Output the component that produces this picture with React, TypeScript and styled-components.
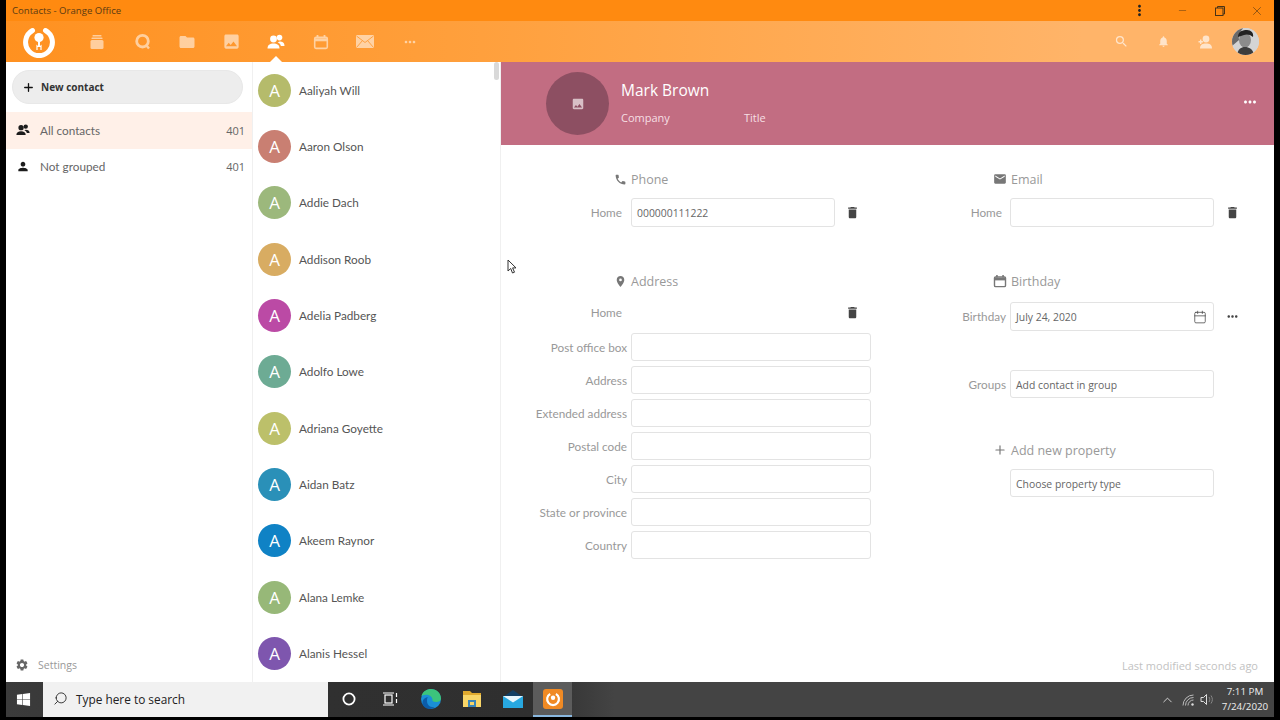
import { ReactNode } from "react";
import styled, { createGlobalStyle } from "styled-components";
import {
  MdDelete,
  MdEmail,
  MdFolder,
  MdImage,
  MdMoreHoriz,
  MdMoreVert,
  MdNotifications,
  MdPerson,
  MdPhone,
  MdPlace,
  MdSearch,
  MdSettings,
} from "react-icons/md";
import { FaWindows } from "react-icons/fa";
import { Calendar, ChevronUp, Minus, Plus, Search, X } from "lucide-react";

const GlobalStyle = createGlobalStyle`
  html, body {
    margin: 0;
    height: 100%;
    background: #000;
    overflow: hidden;
  }
  * {
    box-sizing: border-box;
  }
`;

const Screen = styled.div`
  width: 1280px;
  height: 720px;
  padding: 0 6px 3px;
  background: #000;
  display: flex;
  flex-direction: column;
  position: relative;
  font-family: "Lato", "Open Sans", sans-serif;
  font-size: 11.75px;
  color: #555;
`;

const TitleBar = styled.div`
  height: 21px;
  flex: none;
  padding: 0 7px 0 6px;
  background: #ff8a10;
  display: flex;
  align-items: center;
  gap: 17.5px;
  font-family: "Open Sans", sans-serif;
  font-size: 9.6px;
  color: #5b3a12;
`;

const TitleText = styled.span`
  flex: 1;
`;

const WindowButton = styled.div<{ $shift?: number }>`
  width: 20px;
  margin-right: ${(p) => p.$shift ?? 0}px;
  display: flex;
  justify-content: center;
  color: #4a3316;
`;

const Header = styled.header`
  height: 41px;
  flex: none;
  display: flex;
  align-items: center;
  background: linear-gradient(90deg, #ff9120 0%, #ffa13f 40%, #ffb469 85%);
  color: #fff;
`;

const LogoSlot = styled.div`
  width: 69px;
  padding-left: 17px;
  display: flex;
  align-items: center;
`;

const AppIcons = styled.nav`
  display: flex;
  flex: 1;
  align-items: center;
`;

const AppIcon = styled.div<{ $active?: boolean }>`
  width: 44.7px;
  height: 41px;
  display: flex;
  align-items: center;
  justify-content: center;
  position: relative;
  opacity: ${(p) => (p.$active ? 1 : 0.55)};
  ${(p) =>
    p.$active &&
    `&::after {
      content: "";
      position: absolute;
      bottom: 0;
      left: 50%;
      margin-left: -6px;
      border: 6px solid transparent;
      border-top: 0;
      border-bottom-color: #fff;
    }`}
`;

const RightIcons = styled.div`
  display: flex;
  align-items: center;
  padding-right: 15px;
`;

const RightIcon = styled.div`
  width: 42px;
  display: flex;
  justify-content: center;
  opacity: 0.65;
`;

const UserPhoto = styled.div`
  width: 27px;
  height: 27px;
  margin-left: 6px;
  border-radius: 50%;
  overflow: hidden;
  background: #d5d5d5;
`;

const Main = styled.main`
  flex: 1;
  min-height: 0;
  display: flex;
  background: #fff;
`;

const Sidebar = styled.aside`
  width: 247px;
  flex: none;
  display: flex;
  flex-direction: column;
  border-right: 1px solid #f0f0f0;
`;

const NewContact = styled.button`
  height: 34px;
  margin: 8px 9px 8px 6px;
  padding: 0 0 0 9px;
  border: 1px solid #e8e8e8;
  border-radius: 17px;
  background: #ededed;
  display: flex;
  align-items: center;
  gap: 6px;
  font: 700 10px "Open Sans", sans-serif;
  color: #333;
`;

const GroupRow = styled.div<{ $active?: boolean }>`
  height: 36.5px;
  padding: 0 7px 0 10px;
  display: flex;
  align-items: center;
  background: ${(p) => (p.$active ? "#fff0e8" : "#fff")};
  color: #666;
`;

const GroupIcon = styled.div`
  width: 14px;
  flex: none;
  display: flex;
  justify-content: center;
  color: #1c1c1c;
`;

const GroupName = styled.span`
  flex: 1;
  margin-left: 10px;
`;

const GroupCount = styled.span`
  font-family: "Open Sans", sans-serif;
  font-size: 11px;
`;

const SettingsRow = styled.div`
  margin-top: auto;
  height: 34px;
  padding-left: 9px;
  display: flex;
  align-items: center;
  gap: 9px;
  font-family: "Open Sans", sans-serif;
  font-size: 10.5px;
  color: #999;
  svg {
    color: #666;
  }
`;

const ContactList = styled.section`
  width: 248px;
  flex: none;
  overflow: hidden;
  position: relative;
  border-right: 1px solid #f0f0f0;
`;

const ScrollThumb = styled.div`
  position: absolute;
  top: 0;
  right: 1px;
  width: 5px;
  height: 18px;
  border-radius: 3px;
  background: #d9d9d9;
`;

const ContactRow = styled.div`
  height: 56.35px;
  padding-left: 5px;
  display: flex;
  align-items: center;
  gap: 8px;
  color: #555;
`;

const Initial = styled.div<{ $color: string }>`
  width: 33px;
  height: 33px;
  border-radius: 50%;
  background: ${(p) => p.$color};
  color: #fff;
  display: flex;
  align-items: center;
  justify-content: center;
  font-family: "Open Sans", sans-serif;
  font-size: 17px;
`;

const Details = styled.section`
  flex: 1;
  min-width: 0;
  display: flex;
  flex-direction: column;
`;

const ContactHeader = styled.div`
  height: 83px;
  flex: none;
  padding: 10px 15px 0 45px;
  background: #c26d82;
  display: flex;
  color: #fff;
`;

const BigAvatar = styled.div`
  width: 63px;
  height: 63px;
  border-radius: 50%;
  background: #8d4f62;
  color: #d8bfc6;
  display: flex;
  align-items: center;
  justify-content: center;
`;

const HeaderText = styled.div`
  flex: 1;
  margin-left: 12px;
`;

const ContactName = styled.div`
  margin-top: 6px;
  font-family: "Open Sans", sans-serif;
  font-size: 15.5px;
  line-height: 24px;
`;

const HeaderFields = styled.div`
  margin-top: 8px;
  display: flex;
  font-family: "Open Sans", sans-serif;
  font-size: 11px;
  color: #f6dfe4;
`;

const HeaderField = styled.span`
  width: 123px;
`;

const HeaderMenu = styled.div`
  margin-top: 21px;
  height: 20px;
`;

const Body = styled.div`
  flex: 1;
  min-height: 0;
  padding: 22px 0 0 26px;
  display: flex;
`;

const Column = styled.div<{ $width: number }>`
  width: ${(p) => p.$width}px;
  flex: none;
`;

const SectionHead = styled.div<{ $top?: number }>`
  height: 24px;
  margin: ${(p) => p.$top ?? 0}px 0 0 87px;
  display: flex;
  align-items: center;
  gap: 4px;
  font-family: "Open Sans", sans-serif;
  font-size: 12.5px;
  color: #999;
  svg {
    color: #777;
  }
`;

const Row = styled.div<{ $top: number; $height?: number }>`
  height: ${(p) => p.$height ?? 28}px;
  margin-top: ${(p) => p.$top}px;
  display: flex;
  align-items: center;
`;

const Label = styled.div<{ $inset?: number }>`
  width: 100px;
  padding-right: ${(p) => p.$inset ?? 0}px;
  flex: none;
  text-align: right;
  color: #999;
  white-space: nowrap;
`;

const Input = styled.div<{ $width: number; $nudge?: boolean }>`
  width: ${(p) => p.$width}px;
  height: 100%;
  margin-left: 4px;
  padding: ${(p) => (p.$nudge ? 2 : 0)}px 5px 0;
  flex: none;
  border: 1px solid #e3e3e3;
  border-radius: 3px;
  background: #fff;
  display: flex;
  align-items: center;
  justify-content: space-between;
  font-family: "Open Sans", sans-serif;
  font-size: 10.4px;
  color: #666;
`;

const DateIcon = styled(Calendar)`
  margin-right: 1px;
  color: #444;
`;

const RowAction = styled.div<{ $left: number }>`
  margin-left: ${(p) => p.$left}px;
  display: flex;
  color: #444;
`;

const Footer = styled.div`
  height: 34px;
  flex: none;
  padding-right: 16px;
  display: flex;
  align-items: center;
  justify-content: flex-end;
  font-family: "Open Sans", sans-serif;
  font-size: 11px;
  color: #c2c2c2;
`;

const Taskbar = styled.footer`
  height: 35px;
  flex: none;
  display: flex;
  align-items: stretch;
  background: linear-gradient(90deg, #3b3b3b, #303030 25%, #2f2f2f 42%, #444 48%);
  color: #fff;
`;

const StartButton = styled.div`
  width: 37px;
  padding-right: 3px;
  display: flex;
  align-items: center;
  justify-content: center;
`;

const SearchBox = styled.div`
  width: 285px;
  padding: 0 0 2px 10px;
  background: #f1f1f1;
  display: flex;
  align-items: center;
  gap: 8px;
  font-family: "Open Sans", sans-serif;
  font-size: 11.85px;
  color: #222;
`;

const SearchGlyph = styled(Search)`
  transform: scaleX(-1);
`;

const TaskItem = styled.div<{ $active?: boolean }>`
  width: ${(p) => (p.$active ? 39 : 41)}px;
  display: flex;
  align-items: center;
  justify-content: center;
  background: ${(p) => (p.$active ? "#5c5c5c" : "transparent")};
  border-bottom: 2px solid ${(p) => (p.$active ? "#8ab8e0" : "transparent")};
`;

const Tray = styled.div`
  margin-left: auto;
  padding-right: 4px;
  display: flex;
  align-items: center;
  gap: 5px;
`;

const TrayIcon = styled.div`
  width: 15px;
  display: flex;
  justify-content: center;
`;

const Clock = styled.div`
  width: 50px;
  margin-bottom: 2px;
  text-align: center;
  font-family: "Open Sans", sans-serif;
  font-size: 9.8px;
  line-height: 15px;
  color: #eee;
`;

const Pointer = styled.svg`
  position: absolute;
  left: 507px;
  top: 259px;
`;

const contacts = [
  ["Aaliyah Will", "#b5bb6b"],
  ["Aaron Olson", "#c97f72"],
  ["Addie Dach", "#9cb87c"],
  ["Addison Roob", "#d8ac62"],
  ["Adelia Padberg", "#bb4aa5"],
  ["Adolfo Lowe", "#6dab94"],
  ["Adriana Goyette", "#bcc06a"],
  ["Aidan Batz", "#2a90b8"],
  ["Akeem Raynor", "#0f82c5"],
  ["Alana Lemke", "#97b878"],
  ["Alanis Hessel", "#7e56ae"],
];

const addressFields = [
  "Post office box",
  "Address",
  "Extended address",
  "Postal code",
  "City",
  "State or province",
  "Country",
];

function Logo({ size = 32, color = "#fff" }: { size?: number; color?: string }) {
  return (
    <svg width={size} height={size} viewBox="0 0 32 32" fill="none">
      <path
        d="M9.5 4.500A13.400 13.400 0 1 0 22.500 4.500"
        stroke={color}
        strokeWidth="5"
        strokeLinecap="round"
      />
      <circle cx="16" cy="11.500" r="4.600" fill={color} />
      <path d="M15 15h2v5l1.600-1.500v5.500h-1.200v-3h-2.800v3h-1.200v-5.500L15 20z" fill={color} />
    </svg>
  );
}

function DeckIcon() {
  return (
    <svg width="16" height="16" viewBox="0 0 16 16" fill="#fff">
      <rect x="3.500" y="1" width="9" height="1.400" rx=".5" />
      <rect x="2.500" y="3.400" width="11" height="1.600" rx=".5" />
      <rect x="1.500" y="6" width="13" height="9" rx="1.500" />
    </svg>
  );
}

function TalkIcon() {
  return (
    <svg width="17" height="17" viewBox="0 0 17 17" fill="none">
      <circle cx="8.500" cy="8.200" r="5.800" stroke="#fff" strokeWidth="2.800" />
      <path d="M12 12l3 3.600" stroke="#fff" strokeWidth="2.400" />
    </svg>
  );
}

function ContactsIcon({ size = 18 }: { size?: number }) {
  return (
    <svg width={size} height={size} viewBox="0 0 18 18" fill="currentColor">
      <circle cx="6.500" cy="6" r="3.400" />
      <path d="M.5 15.500c0-3.600 2.400-5 6-5s6 1.400 6 5z" />
      <circle cx="12.500" cy="4.600" r="2.800" />
      <path d="M12.500 8.600c2.900 0 5 1 5 4.400h-3.600c-.4-1.900-1.500-3-3.200-3.600z" />
    </svg>
  );
}

function CalendarIcon({ size = 16, color = "#fff" }: { size?: number; color?: string }) {
  return (
    <svg width={size} height={size} viewBox="0 0 16 16" fill="none">
      <rect x="1.700" y="3.400" width="12.600" height="11" rx="1.300" stroke={color} strokeWidth="1.600" />
      <path d="M1.700 5.800h12.600" stroke={color} strokeWidth="3" />
      <path d="M4.500 1v3M11.500 1v3" stroke={color} strokeWidth="1.800" />
    </svg>
  );
}

function EnvelopeIcon() {
  return (
    <svg width="18" height="13" viewBox="0 0 18 13">
      <rect width="18" height="13" rx="1" fill="#fff" />
      <path
        d="M.5 1L9 7.500 17.500 1M.5 12.500L6.500 5.500M17.500 12.500l-6-7"
        stroke="#ffa64d"
        strokeWidth="1"
        fill="none"
      />
    </svg>
  );
}

function AddUserIcon() {
  return (
    <svg width="16" height="16" viewBox="0 0 16 16" fill="#fff">
      <circle cx="9" cy="5" r="3.400" />
      <path d="M3 14.500c0-3.800 2.500-5 6-5s6 1.200 6 5z" />
      <path d="M1.500 7h1.500V5.500h1.400V7h1.500v1.400H4.400v1.500H3V8.400H1.500z" />
    </svg>
  );
}

function Portrait() {
  return (
    <svg width="27" height="27" viewBox="0 0 27 27">
      <rect width="27" height="27" fill="#d4d4d4" />
      <path d="M0 0h11c-2 4-5 5-4 12l-7 6z" fill="#6a6a6a" />
      <ellipse cx="13" cy="12" rx="6" ry="7.500" fill="#8b8b8b" />
      <path d="M6 9c0-6 5-7 9-7s7 3 6 7c-3-3-7-3-9-2s-4 1-6 2z" fill="#222" />
      <path d="M5 27c1-6 4-8 8-8s8 2 9 8z" fill="#3c3c3c" />
    </svg>
  );
}

function EdgeIcon() {
  return (
    <svg width="22" height="22" viewBox="0 0 22 22">
      <circle cx="11" cy="11" r="10" fill="#1a8fd6" />
      <path
        d="M1.500 8C3 3 7 1 11 1c5.500 0 10 4 10 9.500 0 2.500-2.500 3.500-5 3.500-3 0-4-1.300-3.500-2.500C12 7 6 5.500 1.500 8z"
        fill="#3cc47c"
      />
      <path d="M7 13c0 4 3.500 7 8 6-3 3-9 2.500-11.500-1C1 15 3 9.500 8 9c-1 1-1 2.500-1 4z" fill="#0c5ca8" />
    </svg>
  );
}

function ExplorerIcon() {
  return (
    <svg width="20" height="18" viewBox="0 0 20 18">
      <path d="M1 1h7l2 2h9v3H1z" fill="#e0a92e" />
      <rect x="1" y="5" width="18" height="12" fill="#f8d568" />
      <rect x="6" y="10" width="8" height="7" fill="#3a85b8" />
      <rect x="8" y="12" width="4" height="3" fill="#f8d568" />
    </svg>
  );
}

function MailAppIcon() {
  return (
    <svg width="20" height="18" viewBox="0 0 20 18">
      <path d="M10 0l10 7H0z" fill="#123f63" />
      <rect y="6" width="20" height="12" fill="#28a8e0" />
      <path d="M0 6l10 6.500L20 6z" fill="#e8f6fc" />
    </svg>
  );
}

function Section({ icon, title, top }: { icon: ReactNode; title: string; top?: number }) {
  return (
    <SectionHead $top={top}>
      {icon}
      <span>{title}</span>
    </SectionHead>
  );
}

export default function App() {
  return (
    <Screen>
      <GlobalStyle />
      <TitleBar>
        <TitleText>Contacts - Orange Office</TitleText>
        <WindowButton $shift={5}>
          <MdMoreVert size={17} color="#222" />
        </WindowButton>
        <WindowButton>
          <Minus size={11} strokeWidth={1} />
        </WindowButton>
        <WindowButton>
          <svg width="10" height="10" viewBox="0 0 10 10" fill="none" stroke="#4a3316">
            <rect x=".5" y="2" width="7.500" height="7.500" />
            <path d="M2.500 2V.5h7V8H8" />
          </svg>
        </WindowButton>
        <WindowButton>
          <X size={14} strokeWidth={1} />
        </WindowButton>
      </TitleBar>
      <Header>
        <LogoSlot>
          <Logo />
        </LogoSlot>
        <AppIcons>
          <AppIcon>
            <DeckIcon />
          </AppIcon>
          <AppIcon>
            <TalkIcon />
          </AppIcon>
          <AppIcon>
            <MdFolder size={18} />
          </AppIcon>
          <AppIcon>
            <MdImage size={19} />
          </AppIcon>
          <AppIcon $active>
            <ContactsIcon />
          </AppIcon>
          <AppIcon>
            <CalendarIcon />
          </AppIcon>
          <AppIcon>
            <EnvelopeIcon />
          </AppIcon>
          <AppIcon>
            <MdMoreHoriz size={16} />
          </AppIcon>
        </AppIcons>
        <RightIcons>
          <RightIcon>
            <MdSearch size={15} />
          </RightIcon>
          <RightIcon>
            <MdNotifications size={13} />
          </RightIcon>
          <RightIcon>
            <AddUserIcon />
          </RightIcon>
          <UserPhoto>
            <Portrait />
          </UserPhoto>
        </RightIcons>
      </Header>
      <Main>
        <Sidebar>
          <NewContact>
            <Plus size={13} strokeWidth={2.4} color="#111" />
            New contact
          </NewContact>
          <GroupRow $active>
            <GroupIcon>
              <ContactsIcon size={14} />
            </GroupIcon>
            <GroupName>All contacts</GroupName>
            <GroupCount>401</GroupCount>
          </GroupRow>
          <GroupRow>
            <GroupIcon>
              <MdPerson size={15} />
            </GroupIcon>
            <GroupName>Not grouped</GroupName>
            <GroupCount>401</GroupCount>
          </GroupRow>
          <SettingsRow>
            <MdSettings size={14} />
            Settings
          </SettingsRow>
        </Sidebar>
        <ContactList>
          {contacts.map(([name, color]) => (
            <ContactRow key={name}>
              <Initial $color={color}>A</Initial>
              {name}
            </ContactRow>
          ))}
          <ScrollThumb />
        </ContactList>
        <Details>
          <ContactHeader>
            <BigAvatar>
              <MdImage size={14} />
            </BigAvatar>
            <HeaderText>
              <ContactName>Mark Brown</ContactName>
              <HeaderFields>
                <HeaderField>Company</HeaderField>
                <HeaderField>Title</HeaderField>
              </HeaderFields>
            </HeaderText>
            <HeaderMenu>
              <MdMoreHoriz size={18} />
            </HeaderMenu>
          </ContactHeader>
          <Body>
            <Column $width={379}>
              <Section icon={<MdPhone size={13} />} title="Phone" />
              <Row $top={7} $height={29}>
                <Label $inset={5}>Home</Label>
                <Input $width={204}>000000111222</Input>
                <RowAction $left={10}>
                  <MdDelete size={15} />
                </RowAction>
              </Row>
              <Section icon={<MdPlace size={13} />} title="Address" top={42} />
              <Row $top={5}>
                <Label $inset={5}>Home</Label>
                <RowAction $left={218}>
                  <MdDelete size={15} />
                </RowAction>
              </Row>
              {addressFields.map((field, i) => (
                <Row key={field} $top={i === 0 ? 7 : 5}>
                  <Label>{field}</Label>
                  <Input $width={240} />
                </Row>
              ))}
            </Column>
            <Column $width={368}>
              <Section icon={<MdEmail size={14} />} title="Email" />
              <Row $top={7} $height={29}>
                <Label $inset={4}>Home</Label>
                <Input $width={204} />
                <RowAction $left={11}>
                  <MdDelete size={15} />
                </RowAction>
              </Row>
              <Section icon={<CalendarIcon size={14} color="#777" />} title="Birthday" top={42} />
              <Row $top={9} $height={29}>
                <Label>Birthday</Label>
                <Input $width={204}>
                  July 24, 2020
                  <DateIcon size={14} strokeWidth={1.3} />
                </Input>
                <RowAction $left={11}>
                  <MdMoreHoriz size={15} />
                </RowAction>
              </Row>
              <Row $top={39}>
                <Label>Groups</Label>
                <Input $width={204} $nudge>
                  Add contact in group
                </Input>
              </Row>
              <Section icon={<Plus size={14} color="#777" />} title="Add new property" top={40} />
              <Row $top={7}>
                <Label />
                <Input $width={204} $nudge>
                  Choose property type
                </Input>
              </Row>
            </Column>
          </Body>
          <Footer>Last modified seconds ago</Footer>
        </Details>
      </Main>
      <Taskbar>
        <StartButton>
          <FaWindows size={15} />
        </StartButton>
        <SearchBox>
          <SearchGlyph size={15} strokeWidth={1.4} />
          Type here to search
        </SearchBox>
        <TaskItem>
          <svg width="14" height="14" viewBox="0 0 14 14" fill="none" stroke="#fff" strokeWidth="1.800">
            <circle cx="7" cy="7" r="5.600" />
          </svg>
        </TaskItem>
        <TaskItem>
          <svg width="16" height="14" viewBox="0 0 16 14" fill="none" stroke="#fff" strokeWidth="1.200">
            <rect x="3" y="3" width="7" height="8" />
            <path d="M1 1h11M1 13h11M14.500 1v4M14.500 7v4" />
          </svg>
        </TaskItem>
        <TaskItem>
          <EdgeIcon />
        </TaskItem>
        <TaskItem>
          <ExplorerIcon />
        </TaskItem>
        <TaskItem>
          <MailAppIcon />
        </TaskItem>
        <TaskItem $active>
          <svg width="20" height="20" viewBox="0 0 20 20">
            <rect width="20" height="20" rx="3" fill="#f08a24" />
            <g transform="translate(3 3) scale(.44)">
              <path d="M9.500 4.500A13.400 13.400 0 1 0 22.500 4.500" stroke="#fff" strokeWidth="5" fill="none" />
              <circle cx="16" cy="13" r="5" fill="#fff" />
            </g>
          </svg>
        </TaskItem>
        <Tray>
          <TrayIcon>
            <ChevronUp size={16} strokeWidth={1.2} />
          </TrayIcon>
          <TrayIcon>
            <svg width="14" height="14" viewBox="0 0 14 14" fill="none" stroke="#bbb" strokeWidth="1">
              <path d="M2 12.500A10.500 10.500 0 0 1 12.500 2M4.500 12.500a8 8 0 0 1 8-8M7 12.500A5.500 5.500 0 0 1 12.500 7" />
              <circle cx="11.500" cy="11.500" r="1.200" fill="#ddd" stroke="none" />
            </svg>
          </TrayIcon>
          <TrayIcon>
            <svg width="15" height="13" viewBox="0 0 15 13" fill="none" stroke="#ddd" strokeWidth="1">
              <path d="M1 4.500h2.500L6.500 1.500v10l-3-3H1z" />
              <path d="M9 4c1 1.500 1 3.500 0 5M11 2.500c1.800 2.500 1.800 5.500 0 8" stroke="#888" />
            </svg>
          </TrayIcon>
          <Clock>
            7:11 PM
            <br />
            7/24/2020
          </Clock>
        </Tray>
      </Taskbar>
      <Pointer width="10" height="15" viewBox="0 0 10 15">
        <path d="M1 1v11l2.700-2.500L5.500 14l2-.8L5.600 8.900H9z" fill="#fff" stroke="#333" strokeWidth="1" />
      </Pointer>
    </Screen>
  );
}
